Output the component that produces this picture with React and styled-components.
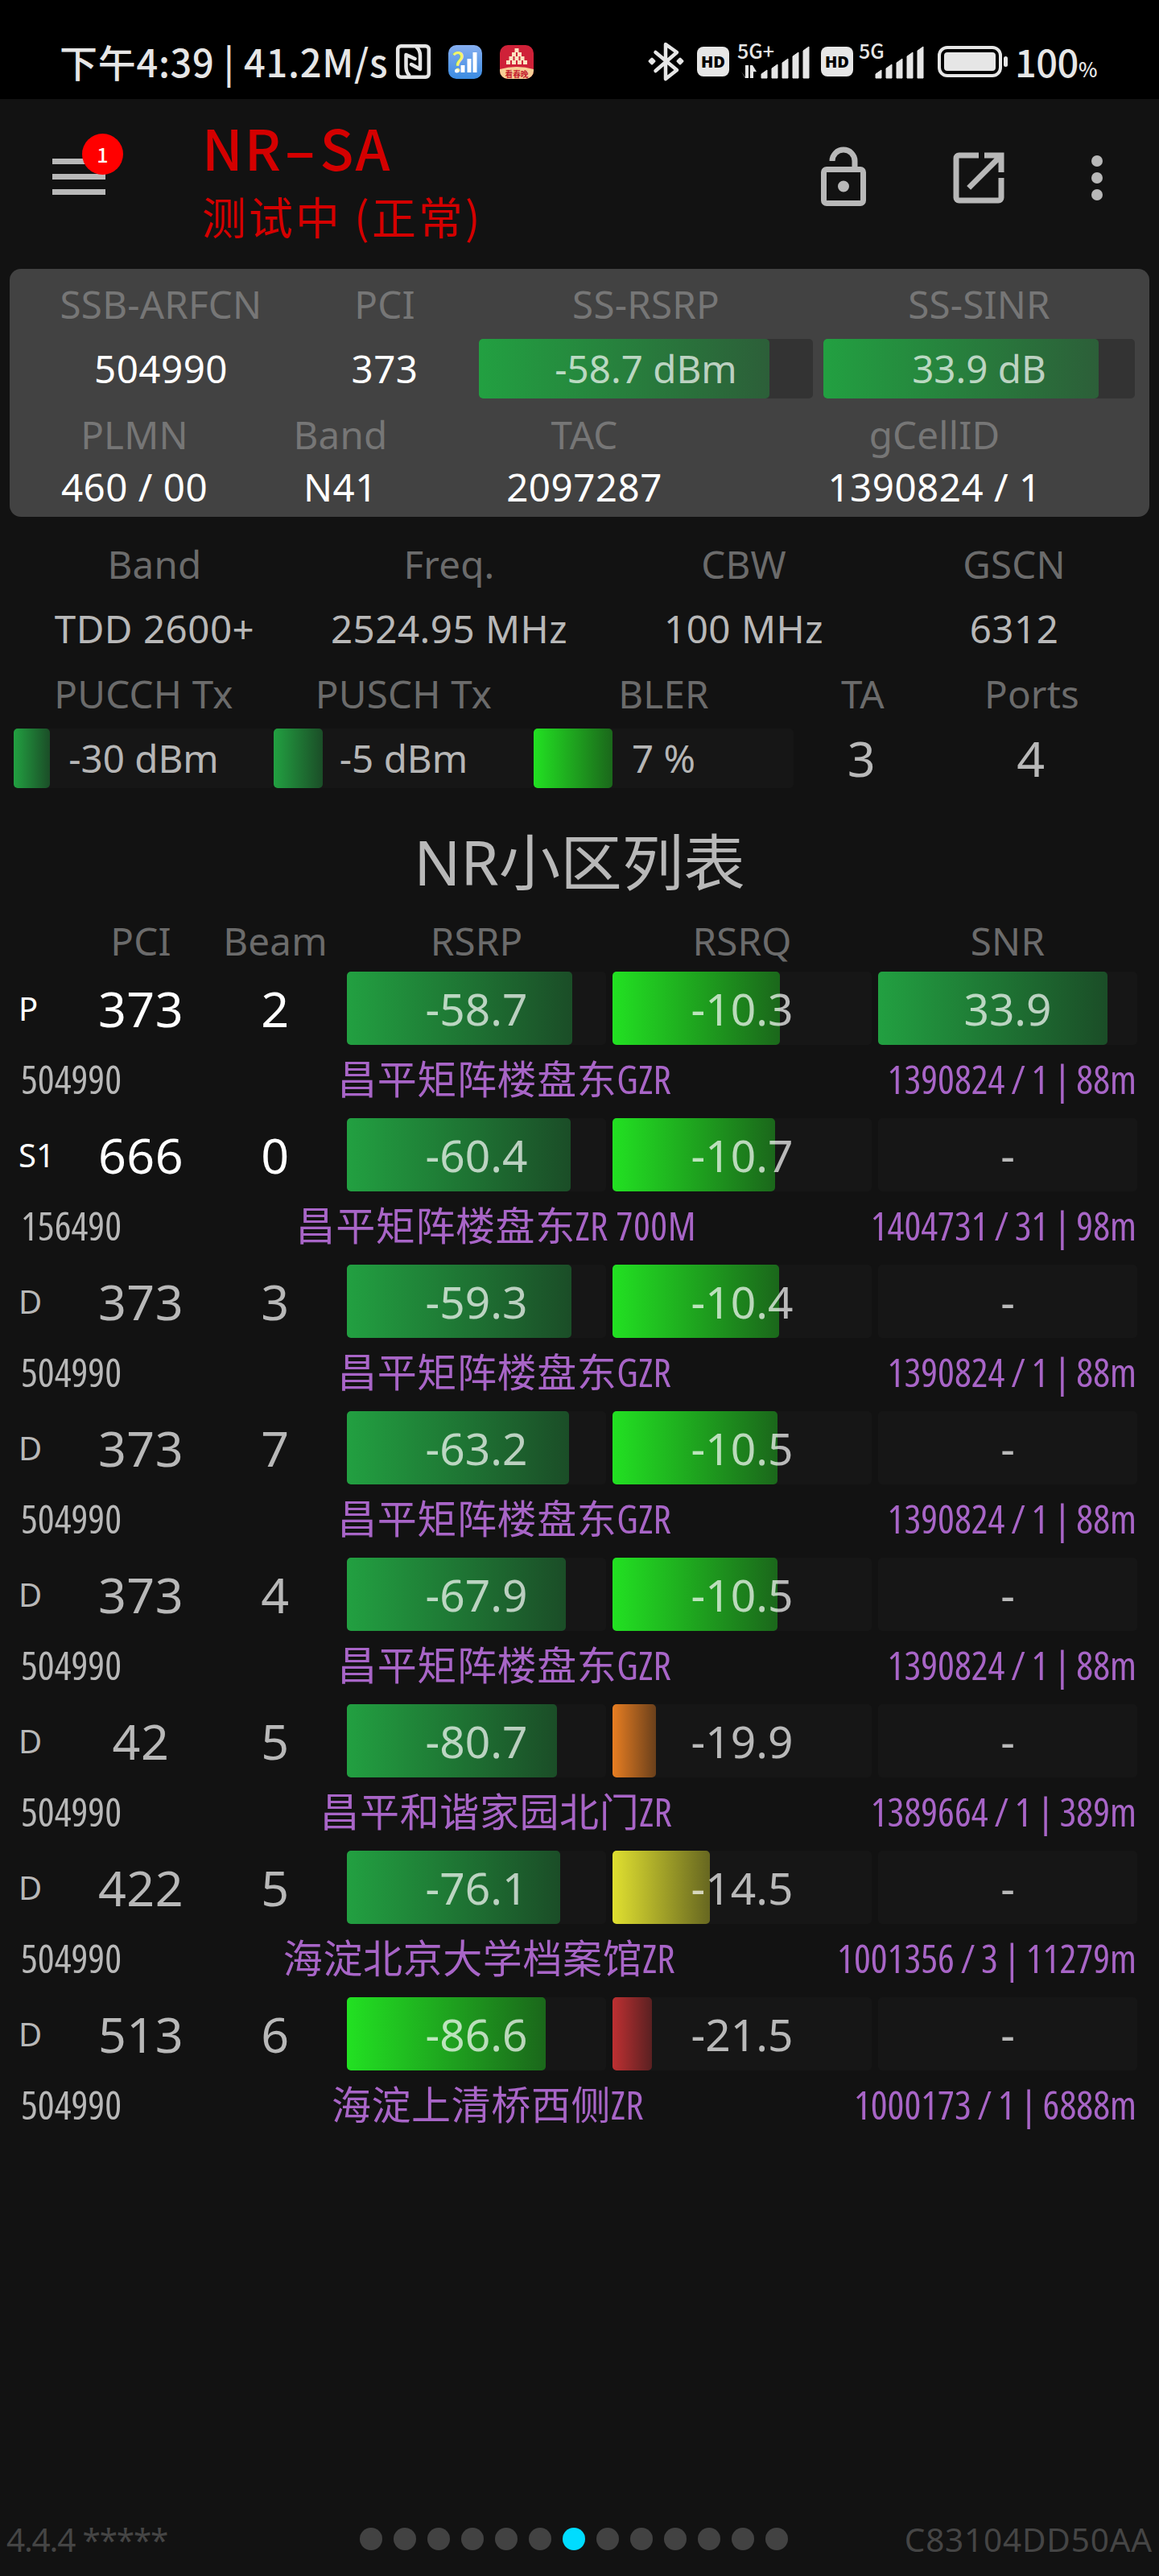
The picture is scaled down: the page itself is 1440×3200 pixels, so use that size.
import React from 'react';
import styled, { createGlobalStyle } from 'styled-components';

const GlobalStyle = createGlobalStyle`
  * {
    box-sizing: border-box;
  }

  body {
    margin: 0;
    background: #121212;
    font-family: 'Noto Sans', 'Noto Sans CJK SC', sans-serif;
  }
`;

const colors = {
  green: '34, 160, 65',
  lime: '34, 225, 34',
  yellow: '224, 224, 48',
  orange: '232, 126, 34',
  red: '191, 48, 50',
};

const Page = styled.div`
  width: 1440px;
  height: 3200px;
  display: flex;
  flex-direction: column;
  background: #121212;
  color: #b8b8b8;
  white-space: nowrap;
  overflow: hidden;
`;

/* status bar */

const StatusBar = styled.div`
  height: 123px;
  flex: none;
  display: flex;
  align-items: flex-start;
  padding-left: 74px;
  background: #000;
  color: #e6e6e6;
  font-family: 'Noto Sans CJK SC', sans-serif;
  font-weight: 500;
`;

const StatusText = styled.span`
  width: ${({ $width }) => $width}px;
  margin-top: 46px;
  margin-left: ${({ $left }) => $left || 0}px;
  font-size: 47px;
  line-height: 60px;
  letter-spacing: ${({ $spacing }) => $spacing || 0}px;

  small {
    font-size: 25px;
    letter-spacing: 0;
  }
`;

const StatusIcon = styled.svg`
  flex: none;
  overflow: visible;
  margin-left: ${({ $left }) => $left || 0}px;
  margin-top: ${({ $top }) => $top}px;
`;

const HdBadge = styled.span`
  width: 40px;
  height: 37px;
  margin-top: 58px;
  margin-left: ${({ $left }) => $left}px;
  border-radius: 8px;
  background: #e6e6e6;
  color: #000;
  font: 900 20px/37px 'Noto Sans', sans-serif;
  text-align: center;
`;

/* header */

const Header = styled.header`
  height: 211px;
  flex: none;
  display: flex;
  align-items: flex-start;
  padding: 0 35px 0 65px;
`;

const MenuButton = styled.div`
  position: relative;
  width: 66px;
  height: 45px;
  margin-top: 74px;
  display: flex;
  flex-direction: column;
  justify-content: space-between;
`;

const MenuLine = styled.span`
  height: 7px;
  background: #b8b8b8;
`;

const Badge = styled.span`
  position: absolute;
  left: 37px;
  top: -31px;
  width: 51px;
  height: 51px;
  border-radius: 50%;
  background: #f00;
  color: #fff;
  font: 500 25px/50px 'Noto Sans CJK SC', sans-serif;
  text-align: center;
`;

const Titles = styled.div`
  flex: 1;
  margin: 19px 0 0 120px;
  color: #d40000;
  font-family: 'Noto Sans CJK SC', sans-serif;
`;

const Title = styled.div`
  font-size: 69px;
  font-weight: 500;
  line-height: 80px;
  letter-spacing: 2px;
`;

const Dash = styled.span`
  display: inline-block;
  margin: 0 10px;
  transform: scaleX(1.7);
`;

const Subtitle = styled.div`
  margin-top: 10px;
  font-size: 55px;
  line-height: 70px;
  letter-spacing: 3px;
`;

const HeaderIcon = styled.svg`
  width: 84px;
  height: 84px;
  flex: none;
  margin-top: 56px;
  margin-left: ${({ $left }) => $left || 0}px;
  fill: #b8b8b8;
`;

/* info panels */

const Card = styled.section`
  flex: none;
  height: 308px;
  margin: 0 12px;
  border-radius: 14px;
  background: #424242;
  color: #fff;
`;

const Details = styled.section`
  flex: none;
  height: 337px;
  padding-top: 19px;
`;

const Row = styled.div`
  display: flex;
  align-items: center;
  height: ${({ $height }) => $height}px;
  padding-left: ${({ $left }) => $left || 0}px;
  padding-bottom: ${({ $bottom }) => $bottom || 0}px;
`;

const Label = styled.div`
  flex: none;
  width: ${({ $width }) => $width}px;
  margin-left: ${({ $left }) => $left || 0}px;
  color: ${({ $onCard }) => ($onCard ? '#767676' : '#6b6b6b')};
  font-size: 47.5px;
  letter-spacing: 0.2px;
  text-align: center;
`;

const Value = styled.div`
  flex: none;
  width: ${({ $width }) => $width}px;
  color: ${({ $bright }) => ($bright ? '#fff' : 'inherit')};
  font-size: ${({ $size }) => $size || 47.5}px;
  line-height: 74px;
  letter-spacing: 0.5px;
  text-align: center;
`;

const Track = styled.div`
  flex: none;
  width: ${({ $width }) => $width}px;
  height: ${({ $height }) => $height || 74}px;
  margin-left: ${({ $left }) => $left || 0}px;
  border-radius: 5px;
  background: ${({ $onCard }) => ($onCard ? '#333' : '#161616')};
  display: grid;
  align-items: center;

  > * {
    grid-area: 1 / 1;
  }
`;

const Fill = styled.div`
  height: 100%;
  border-radius: 5px;
  background: ${({ $color }) => `linear-gradient(90deg, rgb(${colors[$color]}), rgba(${colors[$color]}, 0.4))`};
`;

const MeterText = styled.span`
  z-index: 1;
  color: rgba(255, 255, 255, 0.7);
  font-size: ${({ $size }) => $size || 47.5}px;
  line-height: 74px;
  text-align: center;
`;

function Meter({ text, fill, color, size, ...track }) {
  return (
    <Track {...track}>
      {fill > 0 && <Fill $color={color} style={{ width: fill }} />}
      <MeterText $size={size}>{text}</MeterText>
    </Track>
  );
}

/* cell list */

const ListTitle = styled.h1`
  flex: none;
  height: 151px;
  margin: 0;
  padding-top: 31px;
  font-size: 76.5px;
  font-weight: 400;
  line-height: 120px;
  text-align: center;
`;

const Tag = styled.div`
  flex: none;
  width: 67px;
  color: ${({ $bright }) => ($bright ? '#fff' : 'inherit')};
  font-size: 40px;
`;

const CellRow = styled.div`
  flex: none;
  height: 91px;
  display: flex;
  align-items: center;
  padding-left: 23px;
`;

const SiteRow = styled.div`
  flex: none;
  height: 91px;
  display: flex;
  padding: 0 28px 0 26px;
  font-family: 'Open Sans', 'Noto Sans CJK SC', sans-serif;
  font-size: 49px;
  font-stretch: 75%;
  line-height: 84px;
`;

const SiteName = styled.span`
  flex: 1;
  color: #a865c7;
  letter-spacing: 0.6px;
  text-align: center;
`;

const SiteId = styled.span`
  color: #a865c7;
  word-spacing: -1.5px;
`;

/* footer */

const Footer = styled.footer`
  height: 92px;
  flex: none;
  display: flex;
  align-items: center;
  margin-top: auto;
  padding: 0 8px;
  color: #454545;
  font-size: 40.5px;
`;

const Version = styled.span`
  width: 439px;
  letter-spacing: -1.2px;
`;

const DeviceId = styled.span`
  letter-spacing: 0.8px;
`;

const Dots = styled.div`
  flex: 1;
  display: flex;
  gap: 14px;
`;

const Dot = styled.span`
  width: 28px;
  height: 28px;
  border-radius: 50%;
  background: ${({ $active }) => ($active ? '#00dcff' : '#424242')};
`;

const cells = [
  { tag: 'P', pci: 373, beam: 2, rsrp: ['-58.7', 280, 'green'], rsrq: ['-10.3', 208, 'lime'], snr: ['33.9', 285, 'green'], arfcn: 504990, name: '昌平矩阵楼盘东GZR', site: '1390824 / 1 | 88m' },
  { tag: 'S1', pci: 666, beam: 0, rsrp: ['-60.4', 278, 'green'], rsrq: ['-10.7', 202, 'lime'], snr: ['-'], arfcn: 156490, name: '昌平矩阵楼盘东ZR 700M', site: '1404731 / 31 | 98m' },
  { tag: 'D', pci: 373, beam: 3, rsrp: ['-59.3', 279, 'green'], rsrq: ['-10.4', 207, 'lime'], snr: ['-'], arfcn: 504990, name: '昌平矩阵楼盘东GZR', site: '1390824 / 1 | 88m' },
  { tag: 'D', pci: 373, beam: 7, rsrp: ['-63.2', 276, 'green'], rsrq: ['-10.5', 205, 'lime'], snr: ['-'], arfcn: 504990, name: '昌平矩阵楼盘东GZR', site: '1390824 / 1 | 88m' },
  { tag: 'D', pci: 373, beam: 4, rsrp: ['-67.9', 272, 'green'], rsrq: ['-10.5', 205, 'lime'], snr: ['-'], arfcn: 504990, name: '昌平矩阵楼盘东GZR', site: '1390824 / 1 | 88m' },
  { tag: 'D', pci: 42, beam: 5, rsrp: ['-80.7', 261, 'green'], rsrq: ['-19.9', 54, 'orange'], snr: ['-'], arfcn: 504990, name: '昌平和谐家园北门ZR', site: '1389664 / 1 | 389m' },
  { tag: 'D', pci: 422, beam: 5, rsrp: ['-76.1', 265, 'green'], rsrq: ['-14.5', 121, 'yellow'], snr: ['-'], arfcn: 504990, name: '海淀北京大学档案馆ZR', site: '1001356 / 3 | 11279m' },
  { tag: 'D', pci: 513, beam: 6, rsrp: ['-86.6', 247, 'lime'], rsrq: ['-21.5', 49, 'red'], snr: ['-'], arfcn: 504990, name: '海淀上清桥西侧ZR', site: '1000173 / 1 | 6888m' },
];

function Signal({ left, label, width, data }) {
  return (
    <StatusIcon $left={left} $top={50} width={width} height="48" fill="#e6e6e6">
      <text x="-1" y="23" fontSize="25" fontWeight="500">{label}</text>
      {data && <path d="M4 39l5 7V31h4v16H9zM15 47V31h3l5 8h-4v8z" />}
      {[10, 17, 24, 32, 39].map((h, i) => (
        <path key={h} d={`M${width - 60 + i * 13} 47v-${h - 5}l7-5v${h}z`} stroke="#e6e6e6" strokeLinejoin="round" />
      ))}
    </StatusIcon>
  );
}

function Status() {
  return (
    <StatusBar>
      <StatusText $width={418} $spacing={0.7}>下午4:39 | 41.2M/s</StatusText>
      <StatusIcon $top={55} width="43" height="43" fill="none" stroke="#e6e6e6" strokeWidth="4.5" strokeLinecap="round" strokeLinejoin="round">
        <rect x="2.2" y="2.2" width="38.6" height="38.6" rx="4" />
        <path d="M16 38q-3.500-4-3.500-10V13l11 5M19 25l11 6V14q0-6-4-10" />
      </StatusIcon>
      <StatusIcon $left={22} $top={56} width="42" height="42">
        <linearGradient id="sky" x2="0" y2="1">
          <stop stopColor="#86aef0" />
          <stop offset="1" stopColor="#3b8ce2" />
        </linearGradient>
        <rect width="42" height="42" rx="10" fill="url(#sky)" />
        <text x="4" y="34" fontSize="33" fontWeight="500" fill="#f2f56a">?</text>
        <circle cx="10.500" cy="32" r="2.500" fill="#fff" />
        <path d="M15.500 25h5v9h-5zM23.500 17h5v17h-5zM30.500 9h5v25h-5z" fill="#fff" />
      </StatusIcon>
      <StatusIcon $left={22} $top={56} width="42" height="42">
        <clipPath id="tile"><rect width="42" height="42" rx="10" /></clipPath>
        <g clipPath="url(#tile)">
          <rect width="42" height="42" fill="#cf2138" />
          <path d="M0 30q21-6 42 0v13H0z" fill="#f8cf96" />
        </g>
        <path d="M18.500 4h5v5h-5zM15 9h5v5h-5zM22 9h5v5h-5zM11.500 14h5v5h-5zM18.500 14h5v5h-5zM25.500 14h5v5h-5zM8 19h5v5h-5zM15 19h5v5h-5zM22 19h5v5h-5zM29 19h5v5h-5z" fill="#fbe3c0" />
        <text x="6.500" y="40" fontSize="9.700" fontWeight="700" fill="#c3202e">看春晚</text>
      </StatusIcon>
      <StatusIcon $left={142} $top={52} width="46" height="49" fill="none" stroke="#e6e6e6" strokeWidth="4.500" strokeLinecap="round" strokeLinejoin="round">
        <path d="M9.500 13L36 35 22 46V3l14 10L9.500 36" />
        <path d="M5 21l3 3-3 3-3-3zM40 21l3 3-3 3-3-3z" strokeWidth="3" fill="#e6e6e6" />
      </StatusIcon>
      <HdBadge $left={15}>HD</HdBadge>
      <Signal left={11} label="5G+" width={89} data />
      <HdBadge $left={14}>HD</HdBadge>
      <Signal left={8} label="5G" width={80} />
      <StatusIcon $left={17} $top={57} width="88" height="39">
        <rect x="2" y="2" width="76" height="35" rx="10" fill="none" stroke="#e6e6e6" strokeWidth="4" />
        <rect x="8" y="8" width="64" height="23" rx="4" fill="#e6e6e6" />
        <rect x="82" y="13" width="5" height="13" rx="2.500" fill="#e6e6e6" />
      </StatusIcon>
      <StatusText $width={110} $left={8} $spacing={-0.5}>100<small>%</small></StatusText>
    </StatusBar>
  );
}

export default function App() {
  return (
    <Page>
      <GlobalStyle />
      <Status />

      <Header>
        <MenuButton>
          <MenuLine />
          <MenuLine />
          <MenuLine />
          <Badge>1</Badge>
        </MenuButton>
        <Titles>
          <Title>NR<Dash>-</Dash>SA</Title>
          <Subtitle>测试中 (正常)</Subtitle>
        </Titles>
        <HeaderIcon viewBox="0 0 24 24">
          <path d="M18 20V10H6v10h12m0-12a2 2 0 0 1 2 2v10a2 2 0 0 1-2 2H6a2 2 0 0 1-2-2V10a2 2 0 0 1 2-2h9V6a3 3 0 0 0-6 0H7a5 5 0 0 1 10 0v2h1m-6 9a2 2 0 1 1 0-4 2 2 0 0 1 0 4z" />
        </HeaderIcon>
        <HeaderIcon $left={84} viewBox="0 0 24 24">
          <path d="M14 3v2h3.590l-9.830 9.830 1.410 1.410L19 6.410V10h2V3h-7m5 16H5V5h7V3H5a2 2 0 0 0-2 2v14a2 2 0 0 0 2 2h14a2 2 0 0 0 2-2v-7h-2v7z" />
        </HeaderIcon>
        <HeaderIcon $left={63} viewBox="0 0 24 24">
          <circle cx="12" cy="6" r="2" />
          <circle cx="12" cy="12" r="2" />
          <circle cx="12" cy="18" r="2" />
        </HeaderIcon>
      </Header>

      <Card>
        <Row $height={87}>
          <Label $onCard $width={376}>SSB-ARFCN</Label>
          <Label $onCard $width={180}>PCI</Label>
          <Label $onCard $width={415} $left={27}>SS-RSRP</Label>
          <Label $onCard $width={387} $left={13}>SS-SINR</Label>
        </Row>
        <Row $height={74}>
          <Value $width={376}>504990</Value>
          <Value $width={180}>373</Value>
          <Meter $onCard $width={415} $left={27} text="-58.7 dBm" fill={361} color="green" />
          <Meter $onCard $width={387} $left={13} text="33.9 dB" fill={342} color="green" />
        </Row>
        <Row $height={90} $bottom={2}>
          <Label $onCard $width={310}>PLMN</Label>
          <Label $onCard $width={202}>Band</Label>
          <Label $onCard $width={404}>TAC</Label>
          <Label $onCard $width={466}>gCellID</Label>
        </Row>
        <Row $height={42} $bottom={2}>
          <Value $width={310}>460 / 00</Value>
          <Value $width={202}>N41</Value>
          <Value $width={404}>2097287</Value>
          <Value $width={466}>1390824 / 1</Value>
        </Row>
      </Card>

      <Details>
        <Row $height={80} $left={9} $bottom={1}>
          <Label $width={366}>Band</Label>
          <Label $width={366}>Freq.</Label>
          <Label $width={366}>CBW</Label>
          <Label $width={306}>GSCN</Label>
        </Row>
        <Row $height={80} $left={9}>
          <Value $width={366}>TDD 2600+</Value>
          <Value $width={366}>2524.95 MHz</Value>
          <Value $width={366}>100 MHz</Value>
          <Value $width={306}>6312</Value>
        </Row>
        <Row $height={84} $left={17} $bottom={3}>
          <Label $width={323}>PUCCH Tx</Label>
          <Label $width={323}>PUSCH Tx</Label>
          <Label $width={323}>BLER</Label>
          <Label $width={172}>TA</Label>
          <Label $width={248}>Ports</Label>
        </Row>
        <Row $height={74} $left={17}>
          <Meter $width={323} text="-30 dBm" fill={45} color="green" />
          <Meter $width={323} text="-5 dBm" fill={61} color="green" />
          <Meter $width={323} text="7 %" fill={98} color="lime" />
          <Value $width={169} $size={61}>3</Value>
          <Value $width={252} $size={61}>4</Value>
        </Row>
      </Details>

      <ListTitle>NR小区列表</ListTitle>
      <Row $height={77} $left={90}>
        <Label $width={170}>PCI</Label>
        <Label $width={164}>Beam</Label>
        <Label $width={322} $left={7}>RSRP</Label>
        <Label $width={322} $left={8}>RSRQ</Label>
        <Label $width={322} $left={8}>SNR</Label>
      </Row>
      {cells.map((cell, i) => {
        const bright = cell.tag !== 'D';
        return (
          <React.Fragment key={i}>
            <CellRow>
              <Tag $bright={bright}>{cell.tag}</Tag>
              <Value $bright={bright} $width={170} $size={61}>{cell.pci}</Value>
              <Value $bright={bright} $width={164} $size={61}>{cell.beam}</Value>
              {[cell.rsrp, cell.rsrq, cell.snr].map(([text, fill, color], n) => (
                <Meter key={n} $width={322} $height={91} $left={n ? 8 : 7} size={55} text={text} fill={fill} color={color} />
              ))}
            </CellRow>
            <SiteRow>
              <span>{cell.arfcn}</span>
              <SiteName>{cell.name}</SiteName>
              <SiteId>{cell.site}</SiteId>
            </SiteRow>
          </React.Fragment>
        );
      })}

      <Footer>
        <Version>4.4.4 *****</Version>
        <Dots>
          {Array.from({ length: 13 }).map((_, i) => <Dot key={i} $active={i === 6} />)}
        </Dots>
        <DeviceId>C83104DD50AA</DeviceId>
      </Footer>
    </Page>
  );
}
